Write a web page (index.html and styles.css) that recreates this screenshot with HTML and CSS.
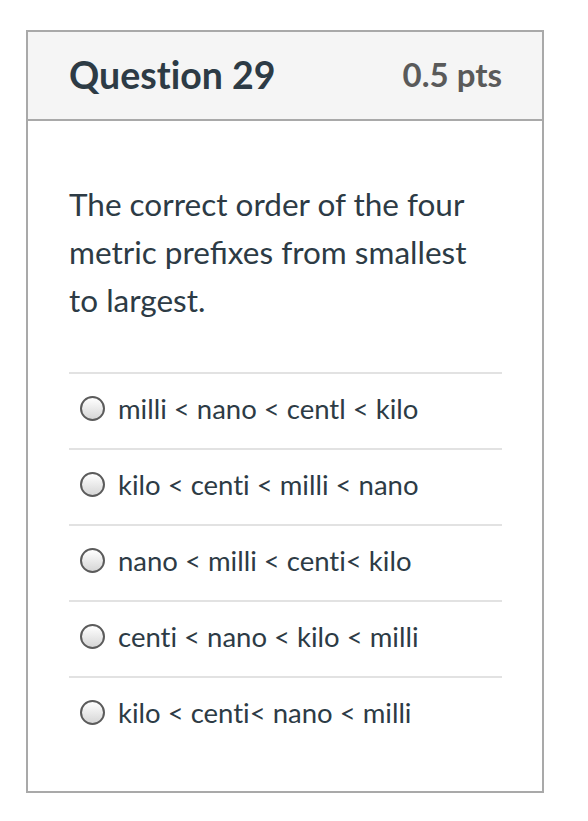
FILE: index.html
```html
<!DOCTYPE html>
<html>
<head>
<meta charset="utf-8">
<link rel="stylesheet" href="styles.css">
</head>
<body>
<div class="card">
  <div class="card-header">
    <span class="title">Question 29</span>
    <span class="points">0.5 pts</span>
  </div>
  <div class="card-body">
    <p class="question">The correct order of the four metric prefixes from smallest to largest.</p>
    <div class="answers">
      <label class="answer"><span class="radio"></span><span class="answer-text">milli &lt; nano &lt; centl &lt; kilo</span></label>
      <label class="answer"><span class="radio"></span><span class="answer-text">kilo &lt; centi &lt; milli &lt; nano</span></label>
      <label class="answer"><span class="radio"></span><span class="answer-text">nano &lt; milli &lt; centi&lt; kilo</span></label>
      <label class="answer"><span class="radio"></span><span class="answer-text">centi &lt; nano &lt; kilo &lt; milli</span></label>
      <label class="answer"><span class="radio"></span><span class="answer-text">kilo &lt; centi&lt; nano &lt; milli</span></label>
    </div>
  </div>
</div>
</body>
</html>
```
FILE: styles.css
```css
* { box-sizing: border-box; }
html, body { margin: 0; padding: 0; background: #fff; }
body {
  padding: 30px 0 0 26px;
  font-family: Lato, "Liberation Sans", sans-serif;
  color: #2d3b45;
}
.card {
  width: 518px;
  height: 763px;
  border: 2px solid #a9a9a9;
  background: #fff;
}
.card-header {
  height: 89px;
  background: #f5f5f5;
  border-bottom: 2px solid #a9a9a9;
  display: flex;
  align-items: center;
  justify-content: space-between;
  padding: 0 40px 3px 41px;
}
.title {
  font-weight: 700;
  font-size: 37.5px;
  color: #2d3b45;
  font-variant-ligatures: none;
}
.points {
  font-weight: 700;
  font-size: 33px;
  color: #5a5a5a;
}
.card-body {
  padding: 59px 40px 0 41px;
}
.question {
  margin: 0;
  font-size: 31.5px;
  line-height: 48px;
}
.answers {
  margin-top: 48px;
}
.answer {
  display: flex;
  align-items: center;
  height: 76px;
  border-top: 2px solid #e2e2e2;
  padding: 0 0 6px 11px;
  gap: 13px;
}
.radio {
  width: 25px;
  height: 25px;
  border-radius: 50%;
  border: 2px solid #5b5b5b;
  background: linear-gradient(#ffffff, #d6d6d6);
  flex: none;
}
.answer-text {
  font-size: 27.5px;
  color: #2d3b45;
  font-variant-ligatures: none;
}
```
